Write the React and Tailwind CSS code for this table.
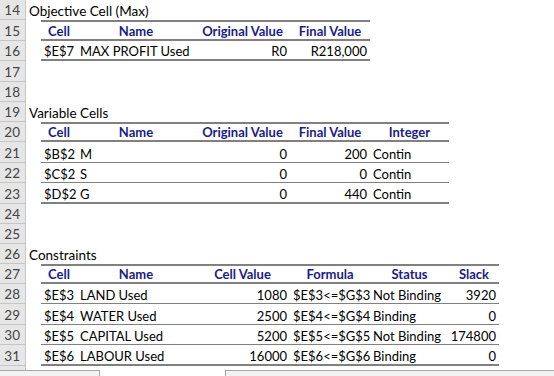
import React from 'react';

const W = { A: 'w-[15px]', B: 'w-[36px]', C: 'w-[118px]', D: 'w-[95px]', E: 'w-[80px]', F: 'w-[79px]', G: 'w-[50px]' };

const rows = [
  { n: 14, h: 'h-[20px]', title: 'Objective Cell (Max)' },
  { n: 15, h: 'h-[21px]', kind: 'head', cols: ['B', 'C', 'D', 'E'], cells: ['Cell', 'Name', 'Original Value', 'Final Value'] },
  { n: 16, h: 'h-[20px]', kind: 'last', cols: ['B', 'C', 'D', 'E'], align: ['l', 'l', 'r', 'r'], cells: ['$E$7', 'MAX PROFIT Used', 'R0', 'R218,000'] },
  { n: 17, h: 'h-[21px]' },
  { n: 18, h: 'h-[20px]' },
  { n: 19, h: 'h-[20px]', title: 'Variable Cells' },
  { n: 20, h: 'h-[20px]', kind: 'head', cols: ['B', 'C', 'D', 'E', 'F'], cells: ['Cell', 'Name', 'Original Value', 'Final Value', 'Integer'] },
  { n: 21, h: 'h-[21px]', kind: 'data', cols: ['B', 'C', 'D', 'E', 'F'], align: ['l', 'l', 'r', 'r', 'l'], cells: ['$B$2', 'M', '0', '200', 'Contin'] },
  { n: 22, h: 'h-[20px]', kind: 'data', cols: ['B', 'C', 'D', 'E', 'F'], align: ['l', 'l', 'r', 'r', 'l'], cells: ['$C$2', 'S', '0', '0', 'Contin'] },
  { n: 23, h: 'h-[21px]', kind: 'last', cols: ['B', 'C', 'D', 'E', 'F'], align: ['l', 'l', 'r', 'r', 'l'], cells: ['$D$2', 'G', '0', '440', 'Contin'] },
  { n: 24, h: 'h-[20px]' },
  { n: 25, h: 'h-[20px]' },
  { n: 26, h: 'h-[20px]', title: 'Constraints' },
  { n: 27, h: 'h-[20px]', kind: 'head', cols: ['B', 'C', 'D', 'E', 'F', 'G'], cells: ['Cell', 'Name', 'Cell Value', 'Formula', 'Status', 'Slack'] },
  { n: 28, h: 'h-[20px]', kind: 'data', cols: ['B', 'C', 'D', 'E', 'F', 'G'], align: ['l', 'l', 'r', 'l', 'l', 'r'], cells: ['$E$3', 'LAND Used', '1080', '$E$3<=$G$3', 'Not Binding', '3920'] },
  { n: 29, h: 'h-[21px]', kind: 'data', cols: ['B', 'C', 'D', 'E', 'F', 'G'], align: ['l', 'l', 'r', 'l', 'l', 'r'], cells: ['$E$4', 'WATER Used', '2500', '$E$4<=$G$4', 'Binding', '0'] },
  { n: 30, h: 'h-[20px]', kind: 'data', cols: ['B', 'C', 'D', 'E', 'F', 'G'], align: ['l', 'l', 'r', 'l', 'l', 'r'], cells: ['$E$5', 'CAPITAL Used', '5200', '$E$5<=$G$5', 'Not Binding', '174800'] },
  { n: 31, h: 'h-[21px]', kind: 'last', cols: ['B', 'C', 'D', 'E', 'F', 'G'], align: ['l', 'l', 'r', 'l', 'l', 'r'], cells: ['$E$6', 'LABOUR Used', '16000', '$E$6<=$G$6', 'Binding', '0'] },
];

const borderFor = {
  head: 'border-t-2 border-b-2 border-[#808080]',
  data: 'border-b border-[#808080]',
  last: 'border-b-2 border-[#808080]',
};

function TableRow({ row }) {
  const head = row.kind === 'head';
  return (
    <div className={`flex h-full ${borderFor[row.kind]}`}>
      {row.cols.map((c, i) => {
        const a = head ? 'justify-center' : row.align[i] === 'r' ? 'justify-end pr-[3px]' : 'justify-start pl-[3px]';
        return (
          <div key={c} className={`${W[c]} flex items-end pb-[1px] whitespace-nowrap ${a}`}>
            <span className={head ? 'font-bold text-[#1b1b87]' : 'text-black'}>{row.cells[i]}</span>
          </div>
        );
      })}
    </div>
  );
}

export default function App() {
  return (
    <div className="w-[554px] h-[376px] overflow-hidden bg-white text-[13px] leading-none" style={{ fontFamily: 'Lato, "Liberation Sans", sans-serif' }}>
      {rows.map((row) => (
        <div key={row.n} className={`flex ${row.h}`}>
          <div className="w-[26px] shrink-0 flex items-end justify-end pr-[5px] pb-[2px] bg-[#e6e6e6] border-b border-r border-[#c6c6c6] text-[13.5px] text-[#444]">
            {row.n}
          </div>
          <div className="flex flex-1 overflow-visible">
            {row.title && (
              <div className="flex items-end pb-[2px] pl-[3px] whitespace-nowrap text-[13.5px] text-black">{row.title}</div>
            )}
            {row.kind && (
              <>
                <div className={W.A} />
                <TableRow row={row} />
              </>
            )}
          </div>
        </div>
      ))}
      <div className="flex h-[4px]">
        <div className="w-[26px] bg-[#e6e6e6] border-r border-[#c6c6c6]" />
      </div>
      <div className="flex h-[6px]">
        <div className="w-[100px] bg-[#f3f3f3] border-t border-r border-[#a6a6a6]" />
        <div className="w-[125px] bg-white" />
        <div className="flex-1 bg-[#f3f3f3] border-t border-l border-[#a6a6a6]" />
      </div>
    </div>
  );
}
